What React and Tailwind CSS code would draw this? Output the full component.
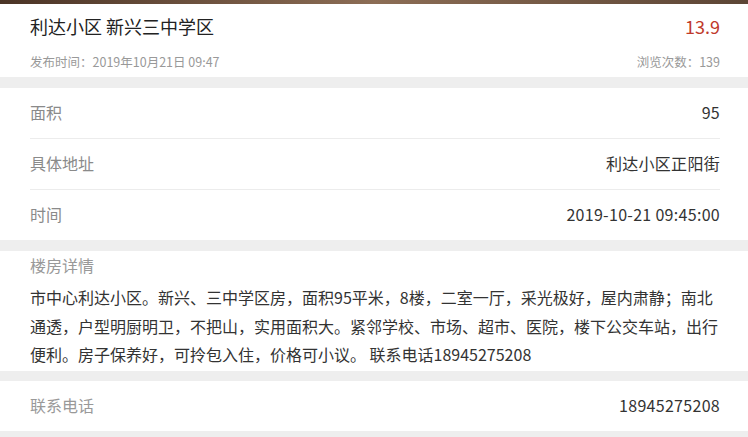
export default function App() {
  const rows = [
    ["面积", "95"],
    ["具体地址", "利达小区正阳街"],
    ["时间", "2019-10-21 09:45:00"],
  ];
  return (
    <div className="w-[748px] h-[437px] overflow-hidden bg-[#eeeeee] font-['Noto_Sans_CJK_SC',sans-serif]">
      <div className="h-[4px] bg-gradient-to-r from-[#4b3426] via-[#8c6d55] to-[#5c4535]" />
      <div className="bg-white h-[73px] pl-[30px] pr-[28px] flex flex-col">
        <div className="flex items-center justify-between h-[46px] pb-[2px]">
          <span className="text-[18px] text-[#222]">利达小区 新兴三中学区</span>
          <span className="text-[18px] text-[#c0392b]">13.9</span>
        </div>
        <div className="flex items-center justify-between h-[24px] text-[12.5px] text-[#999]">
          <span>发布时间：2019年10月21日 09:47</span>
          <span>浏览次数：139</span>
        </div>
      </div>
      <div className="h-[11px]" />
      <div className="bg-white pl-[30px] pr-[28px]">
        {rows.map(([k, v], i) => (
          <div
            key={k}
            className={`flex items-center justify-between text-[16px] pb-[3px] ${i < 2 ? "h-[51px] border-b border-[#ececec]" : "h-[50px]"}`}
          >
            <span className="text-[#8a8a8a]">{k}</span>
            <span className="text-[#333] tracking-[0.3px]">{v}</span>
          </div>
        ))}
      </div>
      <div className="h-[11px]" />
      <div className="bg-white h-[120px] pl-[30px] pr-[28px] pt-[2px]">
        <div className="text-[16px] leading-[24px] text-[#999]">楼房详情</div>
        <div className="mt-[6px] text-[16px] leading-[28.5px] text-[#333]">
          市中心利达小区。新兴、三中学区房，面积95平米，8楼，二室一厅，采光极好，屋内肃静；南北通透，户型明厨明卫，不把山，实用面积大。紧邻学校、市场、超市、医院，楼下公交车站，出行便利。房子保养好，可拎包入住，价格可小议。 联系电话18945275208
        </div>
      </div>
      <div className="h-[10px]" />
      <div className="bg-white h-[50px] pl-[30px] pr-[28px] pb-[3px] flex items-center justify-between text-[16px]">
        <span className="text-[#999]">联系电话</span>
        <span className="text-[#333] tracking-[0.3px]">18945275208</span>
      </div>
    </div>
  );
}
